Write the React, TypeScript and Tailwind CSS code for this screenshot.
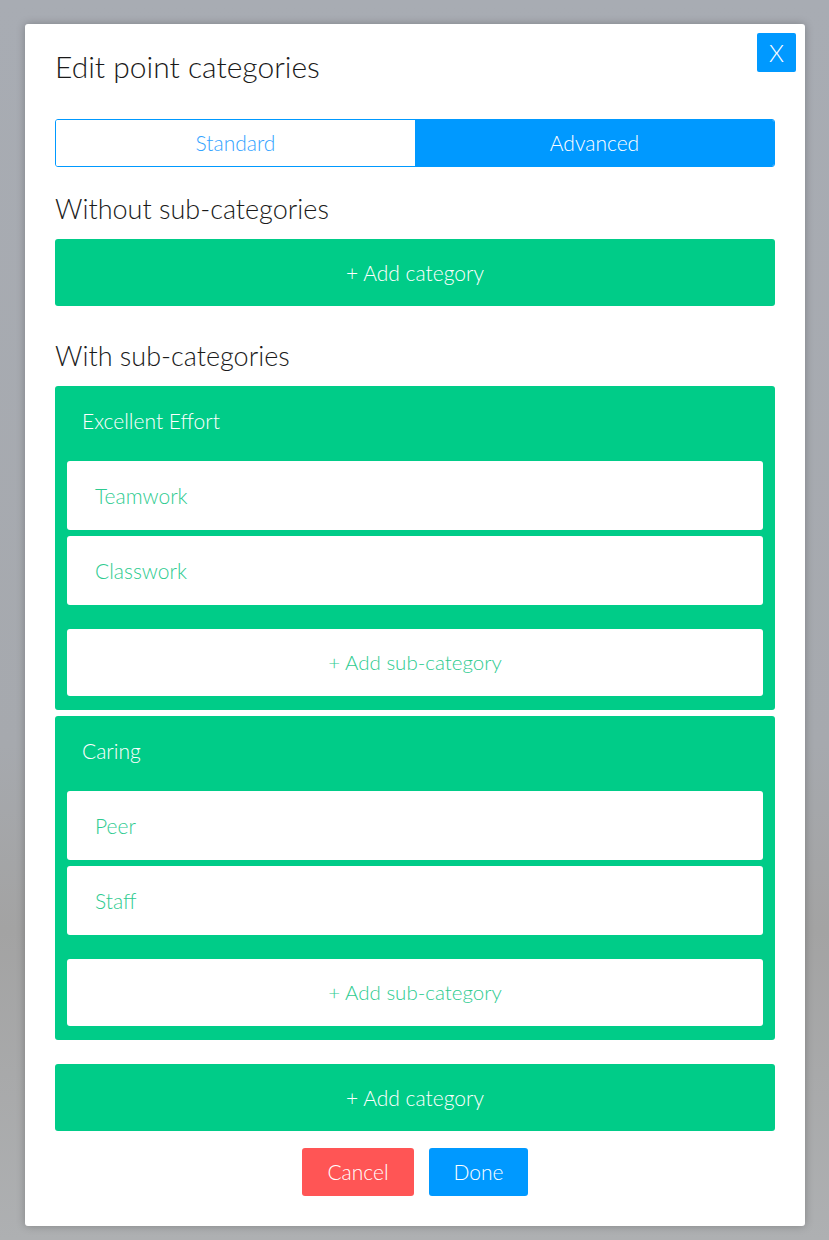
import React from 'react';

const groups = [
  { name: 'Excellent Effort', subs: ['Teamwork', 'Classwork'] },
  { name: 'Caring', subs: ['Peer', 'Staff'] },
];

function Group({ name, subs }: { name: string; subs: string[] }) {
  return (
    <div className="flex flex-col rounded-[3px] bg-[#00cc88] px-[12px] pb-[14px] pt-[15px]">
      <div className="flex h-[40px] items-center px-[15px] text-[21px] text-white">{name}</div>
      <div className="mt-[20px] flex flex-col gap-[6px]">
        {subs.map((s) => (
          <div key={s} className="flex h-[69px] items-center rounded-[3px] bg-white px-[28px] text-[21px] text-[#2ecb90]">
            {s}
          </div>
        ))}
      </div>
      <button className="mt-[24px] flex h-[67px] items-center justify-center rounded-[3px] bg-white text-[20.5px] text-[#2ecb90]">
        + Add sub-category
      </button>
    </div>
  );
}

export default function App() {
  return (
    <main
      className="min-h-[1240px] bg-[linear-gradient(180deg,#a8acb3_0%,#a6a9ae_60%,#a3a3a3_75%,#aeb0b2_100%)] pb-[14px] pl-[25px] pr-[24px] pt-[24px] font-['Lato','Liberation_Sans',sans-serif] font-light"
    >
      <div className="relative flex flex-col rounded-[3px] bg-white px-[30px] pb-[30px] pt-[20px] shadow-[0_0_8px_rgba(0,0,0,0.25)]">
        <button className="absolute right-[9px] top-[9px] flex h-[39px] w-[39px] items-center justify-center rounded-[2px] bg-[#0099ff] text-[24px] text-white">
          X
        </button>
        <h1 className="flex h-[44px] items-center text-[30px] text-[#1a1a1a]">Edit point categories</h1>

        <div className="mt-[31px] flex h-[48px] overflow-hidden rounded-[3px] border border-[#0099ff]">
          <div className="flex flex-1 items-center justify-center bg-white text-[21px] text-[#33a3ff]">Standard</div>
          <div className="flex flex-1 items-center justify-center bg-[#0099ff] text-[21px] text-white">Advanced</div>
        </div>

        <h2 className="mt-[22px] flex h-[40px] items-center text-[27px] text-[#1a1a1a]">Without sub-categories</h2>
        <button className="mt-[10px] flex h-[67px] items-center justify-center rounded-[3px] bg-[#00cc88] text-[21px] text-white">
          + Add category
        </button>

        <h2 className="mt-[30px] flex h-[40px] items-center text-[27px] text-[#1a1a1a]">With sub-categories</h2>
        <div className="mt-[10px] flex flex-col gap-[6px]">
          {groups.map((g) => (
            <Group key={g.name} name={g.name} subs={g.subs} />
          ))}
        </div>

        <button className="mt-[24px] flex h-[67px] items-center justify-center rounded-[3px] bg-[#00cc88] text-[21px] text-white">
          + Add category
        </button>

        <div className="mt-[17px] flex justify-center gap-[15px]">
          <button className="flex h-[48px] w-[112px] items-center justify-center rounded-[3px] bg-[#ff5555] text-[21px] text-white">
            Cancel
          </button>
          <button className="flex h-[48px] w-[99px] items-center justify-center rounded-[3px] bg-[#0099ff] text-[21px] text-white">
            Done
          </button>
        </div>
      </div>
    </main>
  );
}
